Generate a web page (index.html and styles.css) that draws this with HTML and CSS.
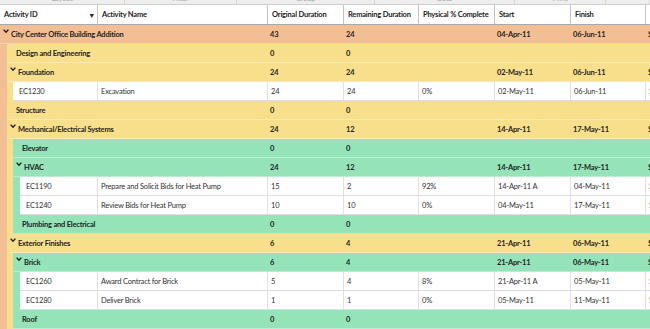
FILE: index.html
```html
<!DOCTYPE html>
<html>

<head>
    <title>Activities</title>
    <link rel="stylesheet" href="styles.css">
</head>

<body>
    <div class="toolbar">
        <span class="seg" style="width:125px">Layout</span>
        <span class="seg" style="width:112px">Filter</span>
        <span class="seg" style="width:138px">Group</span>
        <span class="seg" style="width:140px">Data</span>
        <span class="seg" style="width:91px">Print</span>
        <span class="seg" style="width:44px"></span>
    </div>

    <div class="grid">
        <div class="row hdr">
            <div class="c id">Activity ID<span class="sort">&#9660;</span></div>
            <div class="c nm">Activity Name</div>
            <div class="c od">Original Duration</div>
            <div class="c rd">Remaining Duration</div>
            <div class="c pc">Physical % Complete</div>
            <div class="c st">Start</div>
            <div class="c fi">Finish</div>
            <div class="c co">Budgeted Total Cost</div>
        </div>

        <!-- WBS: project -->
        <div class="grp orange">
            <div class="row sum">
                <div class="c ttl"><svg class="chev" viewBox="0 0 6 4"><polyline points="0.6,0.6 3,3.2 5.4,0.6" /></svg>City Center Office Building Addition</div>
                <div class="c od">43</div>
                <div class="c rd">24</div>
                <div class="c pc"></div>
                <div class="c st">04-Apr-11</div>
                <div class="c fi">06-Jun-11</div>
                <div class="c co">$0.00</div>
            </div>
            <div class="kids">

                <div class="grp yellow">
                    <div class="row sum">
                        <div class="c ttl flat">Design and Engineering</div>
                        <div class="c od">0</div>
                        <div class="c rd">0</div>
                        <div class="c pc"></div>
                        <div class="c st"></div>
                        <div class="c fi"></div>
                        <div class="c co"></div>
                    </div>
                </div>

                <div class="grp yellow">
                    <div class="row sum">
                        <div class="c ttl"><svg class="chev" viewBox="0 0 6 4"><polyline points="0.6,0.6 3,3.2 5.4,0.6" /></svg>Foundation</div>
                        <div class="c od">24</div>
                        <div class="c rd">24</div>
                        <div class="c pc"></div>
                        <div class="c st">02-May-11</div>
                        <div class="c fi">06-Jun-11</div>
                        <div class="c co">$0.00</div>
                    </div>
                    <div class="kids">
                        <div class="row act">
                            <div class="c id">EC1230</div>
                            <div class="c nm">Excavation</div>
                            <div class="c od">24</div>
                            <div class="c rd">24</div>
                            <div class="c pc">0%</div>
                            <div class="c st">02-May-11</div>
                            <div class="c fi">06-Jun-11</div>
                            <div class="c co">$0.00</div>
                        </div>
                    </div>
                </div>

                <div class="grp yellow">
                    <div class="row sum">
                        <div class="c ttl flat">Structure</div>
                        <div class="c od">0</div>
                        <div class="c rd">0</div>
                        <div class="c pc"></div>
                        <div class="c st"></div>
                        <div class="c fi"></div>
                        <div class="c co"></div>
                    </div>
                </div>

                <div class="grp yellow">
                    <div class="row sum">
                        <div class="c ttl"><svg class="chev" viewBox="0 0 6 4"><polyline points="0.6,0.6 3,3.2 5.4,0.6" /></svg>Mechanical/Electrical Systems</div>
                        <div class="c od">24</div>
                        <div class="c rd">12</div>
                        <div class="c pc"></div>
                        <div class="c st">14-Apr-11</div>
                        <div class="c fi">17-May-11</div>
                        <div class="c co">$0.00</div>
                    </div>
                    <div class="kids">
                        <div class="grp green">
                            <div class="row sum">
                                <div class="c ttl flat">Elevator</div>
                                <div class="c od">0</div>
                                <div class="c rd">0</div>
                                <div class="c pc"></div>
                                <div class="c st"></div>
                                <div class="c fi"></div>
                                <div class="c co"></div>
                            </div>
                        </div>
                        <div class="grp green">
                            <div class="row sum">
                                <div class="c ttl"><svg class="chev" viewBox="0 0 6 4"><polyline points="0.6,0.6 3,3.2 5.4,0.6" /></svg>HVAC</div>
                                <div class="c od">24</div>
                                <div class="c rd">12</div>
                                <div class="c pc"></div>
                                <div class="c st">14-Apr-11</div>
                                <div class="c fi">17-May-11</div>
                                <div class="c co">$0.00</div>
                            </div>
                            <div class="kids">
                                <div class="row act">
                                    <div class="c id">EC1190</div>
                                    <div class="c nm">Prepare and Solicit Bids for Heat Pump</div>
                                    <div class="c od">15</div>
                                    <div class="c rd">2</div>
                                    <div class="c pc">92%</div>
                                    <div class="c st">14-Apr-11 A</div>
                                    <div class="c fi">04-May-11</div>
                                    <div class="c co">$0.00</div>
                                </div>
                                <div class="row act">
                                    <div class="c id">EC1240</div>
                                    <div class="c nm">Review Bids for Heat Pump</div>
                                    <div class="c od">10</div>
                                    <div class="c rd">10</div>
                                    <div class="c pc">0%</div>
                                    <div class="c st">04-May-11</div>
                                    <div class="c fi">17-May-11</div>
                                    <div class="c co">$0.00</div>
                                </div>
                            </div>
                        </div>
                        <div class="grp green">
                            <div class="row sum">
                                <div class="c ttl flat">Plumbing and Electrical</div>
                                <div class="c od">0</div>
                                <div class="c rd">0</div>
                                <div class="c pc"></div>
                                <div class="c st"></div>
                                <div class="c fi"></div>
                                <div class="c co"></div>
                            </div>
                        </div>
                    </div>
                </div>

                <div class="grp yellow">
                    <div class="row sum">
                        <div class="c ttl"><svg class="chev" viewBox="0 0 6 4"><polyline points="0.6,0.6 3,3.2 5.4,0.6" /></svg>Exterior Finishes</div>
                        <div class="c od">6</div>
                        <div class="c rd">4</div>
                        <div class="c pc"></div>
                        <div class="c st">21-Apr-11</div>
                        <div class="c fi">06-May-11</div>
                        <div class="c co">$0.00</div>
                    </div>
                    <div class="kids">
                        <div class="grp green">
                            <div class="row sum">
                                <div class="c ttl"><svg class="chev" viewBox="0 0 6 4"><polyline points="0.6,0.6 3,3.2 5.4,0.6" /></svg>Brick</div>
                                <div class="c od">6</div>
                                <div class="c rd">4</div>
                                <div class="c pc"></div>
                                <div class="c st">21-Apr-11</div>
                                <div class="c fi">06-May-11</div>
                                <div class="c co">$0.00</div>
                            </div>
                            <div class="kids">
                                <div class="row act">
                                    <div class="c id">EC1260</div>
                                    <div class="c nm">Award Contract for Brick</div>
                                    <div class="c od">5</div>
                                    <div class="c rd">4</div>
                                    <div class="c pc">8%</div>
                                    <div class="c st">21-Apr-11 A</div>
                                    <div class="c fi">05-May-11</div>
                                    <div class="c co">$0.00</div>
                                </div>
                                <div class="row act">
                                    <div class="c id">EC1280</div>
                                    <div class="c nm">Deliver Brick</div>
                                    <div class="c od">1</div>
                                    <div class="c rd">1</div>
                                    <div class="c pc">0%</div>
                                    <div class="c st">05-May-11</div>
                                    <div class="c fi">11-May-11</div>
                                    <div class="c co">$0.00</div>
                                </div>
                            </div>
                        </div>
                        <div class="grp green">
                            <div class="row sum">
                                <div class="c ttl flat">Roof</div>
                                <div class="c od">0</div>
                                <div class="c rd">0</div>
                                <div class="c pc"></div>
                                <div class="c st"></div>
                                <div class="c fi"></div>
                                <div class="c co"></div>
                            </div>
                        </div>
                    </div>
                </div>

            </div>
        </div>
    </div>
</body>

</html>
```

FILE: styles.css
```css
* {
    box-sizing: border-box;
}

body {
    margin: 0;
    background-color: #ffffff;
    font-family: Lato, "Liberation Sans", Arial, sans-serif;
    font-size: 7.5px;
    letter-spacing: -0.2px;
    color: #333;
    overflow: hidden;
}

/* strip of the ribbon above the table, mostly scrolled away */
.toolbar {
    display: flex;
    height: 5px;
    overflow: hidden;
    background-color: #eeeeee;
    border-bottom: 1px solid #cfcfcf;
}

.seg {
    flex: none;
    border-right: 1px solid #d6d6d6;
    text-align: center;
    color: #a8a8a8;
    line-height: 8px;
    margin-top: -5px;
}

.grid {
    width: 700px;
}

.row {
    display: flex;
    height: 19px;
    align-items: center;
}

.c {
    flex: none;
    height: 100%;
    display: flex;
    align-items: center;
    padding-left: 3px;
    white-space: nowrap;
    overflow: hidden;
}

.id,
.ttl {
    flex: 1;
    min-width: 0;
}

.nm {
    width: 170px;
}

.od {
    width: 76px;
}

.rd {
    width: 75px;
}

.pc {
    width: 76px;
}

.st {
    width: 76px;
}

.fi {
    width: 75px;
}

.co {
    width: 55px;
}

/* column headings */
.hdr {
    height: 20px;
    background-color: #ffffff;
    border-bottom: 1px solid #a9a9a9;
    font-weight: bold;
    color: #222;
}

.hdr .c {
    padding-left: 4px;
}

.hdr .c+.c {
    border-left: 1px solid #c4c4c4;
}

.hdr .id {
    position: relative;
}

.sort {
    position: absolute;
    right: 2px;
    top: 6px;
    font-size: 7px;
    color: #222;
}

/* wbs bands */
.orange {
    background-color: #f2be94;
}

.yellow {
    background-color: #f8df8b;
}

.green {
    background-color: #95e4b9;
}

.kids {
    padding-left: 7px;
}

.yellow>.kids {
    padding-left: 6px;
}

.sum {
    font-weight: bold;
    color: #1e1e1e;
    border-bottom: 1px solid rgba(255, 255, 255, 0.35);
}

.sum .ttl {
    padding-left: 3px;
}

.sum .ttl.flat {
    padding-left: 9px;
}

.chev {
    width: 6px;
    height: 4px;
    align-self: flex-start;
    margin-top: 4px;
    margin-right: 2px;
    fill: none;
    stroke: #1a1a1a;
    stroke-width: 1.4;
}

/* activities */
.act {
    background-color: #ffffff;
    border-bottom: 1px solid #dedede;
}

.act .c+.c {
    border-left: 1px solid #e1e1e1;
}

.act .id {
    padding-left: 6px;
}
```
